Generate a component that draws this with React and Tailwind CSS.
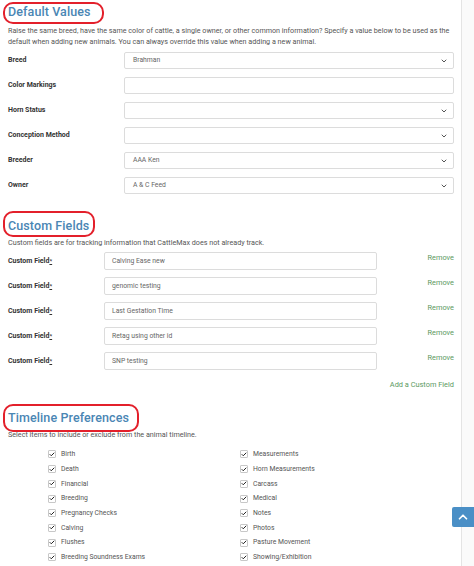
import { ChevronDown, ChevronUp, Check } from "lucide-react";

const defaults = [
  { label: "Breed", value: "Brahman", select: true },
  { label: "Color Markings", value: "", select: false },
  { label: "Horn Status", value: "", select: true },
  { label: "Conception Method", value: "", select: true },
  { label: "Breeder", value: "AAA Ken", select: true },
  { label: "Owner", value: "A & C Feed", select: true },
];

const customFields = [
  "Calving Ease new",
  "genomic testing",
  "Last Gestation Time",
  "Retag using other id",
  "SNP testing",
];

const leftItems = [
  "Birth",
  "Death",
  "Financial",
  "Breeding",
  "Pregnancy Checks",
  "Calving",
  "Flushes",
  "Breeding Soundness Exams",
];

const rightItems = [
  "Measurements",
  "Horn Measurements",
  "Carcass",
  "Medical",
  "Notes",
  "Photos",
  "Pasture Movement",
  "Showing/Exhibition",
];

function Title({ children, ring }) {
  return (
    <div className="h-[20px] flex items-center">
      <span className="relative inline-block text-[12.5px] leading-[20px] text-[#4a86b4] font-medium tracking-[0.1px]">
        {children}
        <span className={"absolute border-[2.5px] border-[#e3202b] rounded-[10px] pointer-events-none " + ring} />
      </span>
    </div>
  );
}

function Box() {
  return (
    <span className="w-[8px] h-[8px] border border-[#c8c8c8] bg-white rounded-[1px] flex items-center justify-center">
      <Check size={7} strokeWidth={4} className="text-[#222]" />
    </span>
  );
}

export default function App() {
  return (
    <div
      className="relative flex min-h-[566px] w-[474px] bg-[#fafafa] text-[#555] overflow-hidden"
      style={{ fontFamily: "Roboto, 'Liberation Sans', sans-serif" }}
    >
      <div className="w-[462px] bg-white border-r border-[#e4e4e4] pl-[8px] pr-[7px] pt-[2px]">
        <Title ring="-left-[5px] -right-[13px] top-0 -bottom-[2px]">Default Values</Title>
        <p className="mt-[3px] text-[7.2px] leading-[11px] text-[#555]">
          Raise the same breed, have the same color of cattle, a single owner, or other common information? Specify a value below to be used as the default when adding new animals. You can always override this value when adding a new animal.
        </p>
        <div className="mt-[5px] flex flex-col gap-[8px]">
          {defaults.map((f) => (
            <div key={f.label} className="flex items-center h-[17px]">
              <span className="w-[116px] text-[7px] font-bold text-[#333]">{f.label}</span>
              <div className="flex-1 h-[17px] border border-[#dcdcdc] rounded-[2px] flex items-center justify-between px-[8px]">
                <span className="text-[6.8px] text-[#666]">{f.value}</span>
                {f.select && <ChevronDown size={8} strokeWidth={3} className="text-[#555] -mr-[3px]" />}
              </div>
            </div>
          ))}
        </div>

        <div className="mt-[22px]">
          <Title ring="-left-[5px] -right-[6px] -top-[5px] -bottom-[1px]">Custom Fields</Title>
        </div>
        <p className="mt-[1px] text-[7.2px] leading-[11px] text-[#555]">
          Custom fields are for tracking information that CattleMax does not already track.
        </p>
        <div className="mt-[4px] flex flex-col gap-[7px]">
          {customFields.map((c) => (
            <div key={c} className="flex items-center h-[18px]">
              <span className="w-[96px] text-[7px] font-bold text-[#333]">
                Custom Field<span className="underline text-[6px] align-top">*</span>
              </span>
              <div className="w-[273px] h-[18px] border border-[#dcdcdc] rounded-[2px] flex items-center px-[7px]">
                <span className="text-[6.8px] text-[#666]">{c}</span>
              </div>
              <span className="ml-auto text-[7.4px] text-[#5c9a62] -mt-[6px]">Remove</span>
            </div>
          ))}
        </div>
        <div className="mt-[9px] flex justify-end">
          <span className="text-[7.4px] text-[#5c9a62]">Add a Custom Field</span>
        </div>

        <div className="mt-[18px]">
          <Title ring="-left-[5px] -right-[10px] -top-[4px] -bottom-[4px]">Timeline Preferences</Title>
        </div>
        <p className="mt-[1px] text-[7.2px] leading-[11px] text-[#555]">
          Select items to include or exclude from the animal timeline.
        </p>
        <div className="mt-[7px] pl-[40px] grid grid-cols-[192px_1fr]">
          {[leftItems, rightItems].map((col, i) => (
            <div key={i} className="flex flex-col">
              {col.map((item) => (
                <div key={item} className="flex items-center gap-[5px] h-[14.7px]">
                  <Box />
                  <span className="text-[6.8px] text-[#555]">{item}</span>
                </div>
              ))}
            </div>
          ))}
        </div>
      </div>

      <div className="absolute left-[452px] top-[507px] w-[22px] h-[20px] bg-[#4a8fc6] rounded-l-[2px] flex items-center justify-center">
        <ChevronUp size={14} strokeWidth={3} className="text-white" />
      </div>
    </div>
  );
}
